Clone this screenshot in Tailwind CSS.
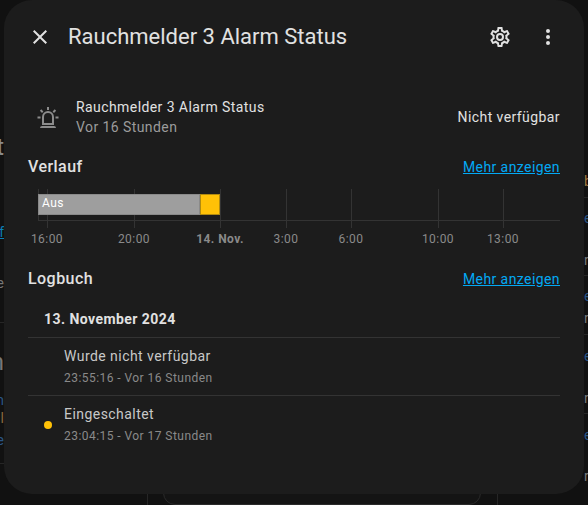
<!DOCTYPE html>
<html lang="de">
<head>
  <meta charset="UTF-8">
  <meta name="viewport" content="width=device-width, initial-scale=1.0">
  <title>Rauchmelder 3 Alarm Status</title>
  <script src="https://cdn.jsdelivr.net/npm/@tailwindcss/browser@4"></script>
</head>
<body class="relative bg-[#111111] w-[588px] h-[505px] overflow-hidden font-['Roboto',sans-serif]">
  <!-- Seite hinter dem Dialog: nur die Ränder sind sichtbar -->
  <div class="absolute inset-0 text-lg leading-none">
    <span class="absolute right-[584px] top-[131px] text-[#8a8a8a] text-2xl">t</span>
    <span class="absolute right-[584px] top-[222px] text-[#0c7fb5] text-sm underline">f</span>
    <span class="absolute right-[584px] top-[273px] text-[#777777] text-sm">e</span>
    <span class="absolute right-[584px] top-[346px] text-[#777777] text-2xl">n</span>
    <span class="absolute right-[584px] top-[390px] text-[#2a5585] text-sm">n</span>
    <span class="absolute right-[584px] top-[408px] text-[#8a6a40] text-sm">l</span>
    <span class="absolute right-[584px] top-[430px] text-[#2a5585] text-sm">e</span>
    <span class="absolute left-0 w-1 top-[322px] h-px bg-[#262626]"></span>
    <span class="absolute left-0 w-1 top-[463px] h-px bg-[#262626]"></span>

    <span class="absolute left-[584px] top-[171px] text-[#a07840] text-sm">b</span>
    <span class="absolute left-[584px] top-[208px] text-[#2a5585] text-sm">e</span>
    <span class="absolute left-[584px] top-[250px] text-[#777777] text-sm">r</span>
    <span class="absolute left-[584px] top-[286px] text-[#2a5585] text-sm">e</span>
    <span class="absolute left-[584px] top-[308px] text-[#777777] text-sm">r</span>
    <span class="absolute left-[584px] top-[346px] text-[#2a5585] text-sm">e</span>
    <span class="absolute left-[584px] top-[388px] text-[#777777] text-sm">r</span>
    <span class="absolute left-[584px] top-[425px] text-[#2a5585] text-sm">e</span>
    <span class="absolute left-[584px] top-[466px] text-[#777777] text-sm">r</span>
    <span class="absolute left-[584px] w-1 top-[197px] h-px bg-[#262626]"></span>
    <span class="absolute left-[584px] w-1 top-[275px] h-px bg-[#262626]"></span>
    <span class="absolute left-[584px] w-1 top-[334px] h-px bg-[#262626]"></span>
    <span class="absolute left-[584px] w-1 top-[413px] h-px bg-[#262626]"></span>

    <span class="absolute left-[147px] top-[480px] w-px h-[25px] bg-[#262626]"></span>
    <span class="absolute left-[497px] top-[480px] w-px h-[25px] bg-[#262626]"></span>
    <span class="absolute left-[163px] w-[318px] top-[470px] h-[35px] rounded-b-[12px] bg-[#141414] border border-[#2a2a2a]"></span>
  </div>

  <!-- Dialog -->
  <div class="relative ml-1 w-[580px] h-[494px] bg-[#1c1c1c] rounded-[28px] flex flex-col">
    <!-- Kopfzeile -->
    <header class="flex items-center h-[74px] pl-6 pr-6 shrink-0">
      <svg class="w-6 h-6 fill-[#e1e1e1]" viewBox="0 0 24 24"><path d="M19,6.41L17.59,5L12,10.59L6.41,5L5,6.41L10.59,12L5,17.59L6.41,19L12,13.41L17.59,19L19,17.59L13.41,12L19,6.41Z"/></svg>
      <h1 class="ml-4 text-[22px] leading-7 text-[#e1e1e1] flex-1">Rauchmelder 3 Alarm Status</h1>
      <svg class="w-6 h-6 fill-[#e1e1e1] mr-6" viewBox="0 0 24 24"><path d="M12,8A4,4 0 0,1 16,12A4,4 0 0,1 12,16A4,4 0 0,1 8,12A4,4 0 0,1 12,8M12,10A2,2 0 0,0 10,12A2,2 0 0,0 12,14A2,2 0 0,0 14,12A2,2 0 0,0 12,10M10,22C9.75,22 9.54,21.82 9.5,21.58L9.13,18.93C8.5,18.68 7.96,18.34 7.44,17.94L4.95,18.95C4.73,19.03 4.46,18.95 4.34,18.73L2.34,15.27C2.21,15.05 2.27,14.78 2.46,14.63L4.57,12.97L4.5,12L4.57,11L2.46,9.37C2.27,9.22 2.21,8.95 2.34,8.73L4.34,5.27C4.46,5.05 4.73,4.96 4.95,5.05L7.44,6.05C7.96,5.66 8.5,5.32 9.13,5.07L9.5,2.42C9.54,2.18 9.75,2 10,2H14C14.25,2 14.46,2.18 14.5,2.42L14.87,5.07C15.5,5.32 16.04,5.66 16.56,6.05L19.05,5.05C19.27,4.96 19.54,5.05 19.66,5.27L21.66,8.73C21.79,8.95 21.73,9.22 21.54,9.37L19.43,11L19.5,12L19.43,13L21.54,14.63C21.73,14.78 21.79,15.05 21.66,15.27L19.66,18.73C19.54,18.95 19.27,19.04 19.05,18.95L16.56,17.95C16.04,18.34 15.5,18.68 14.87,18.93L14.5,21.58C14.46,21.82 14.25,22 14,22H10M11.25,4L10.88,6.61C9.68,6.86 8.62,7.5 7.85,8.39L5.44,7.35L4.69,8.65L6.8,10.2C6.4,11.37 6.4,12.64 6.8,13.8L4.68,15.36L5.43,16.66L7.86,15.62C8.63,16.5 9.68,17.14 10.87,17.38L11.24,20H12.76L13.13,17.39C14.32,17.14 15.37,16.5 16.14,15.62L18.57,16.66L19.32,15.36L17.2,13.81C17.6,12.64 17.6,11.37 17.2,10.2L19.31,8.65L18.56,7.35L16.15,8.39C15.38,7.5 14.32,6.86 13.12,6.62L12.75,4H11.25Z"/></svg>
      <svg class="w-6 h-6 fill-[#e1e1e1]" viewBox="0 0 24 24"><path d="M12,16A2,2 0 0,1 14,18A2,2 0 0,1 12,20A2,2 0 0,1 10,18A2,2 0 0,1 12,16M12,10A2,2 0 0,1 14,12A2,2 0 0,1 12,14A2,2 0 0,1 10,12A2,2 0 0,1 12,10M12,4A2,2 0 0,1 14,6A2,2 0 0,1 12,8A2,2 0 0,1 10,6A2,2 0 0,1 12,4Z"/></svg>
    </header>

    <main class="px-6 flex-1">
      <!-- Status -->
      <div class="flex items-center h-10 mt-[23px]">
        <div class="w-12 shrink-0 pl-2 pt-[2px]">
          <svg class="w-6 h-6 fill-[#8c8c8c]" viewBox="0 0 24 24"><path d="M6,6.9L3.87,4.78L5.28,3.37L7.4,5.5L6,6.9M13,1V4H11V1H13M20.13,4.78L18,6.9L16.6,5.5L18.72,3.37L20.13,4.78M4.5,10.5V12.5H1.5V10.5H4.5M19.5,10.5H22.5V12.5H19.5V10.5M6,20H18A2,2 0 0,1 20,22H4A2,2 0 0,1 6,20M12,5A6,6 0 0,1 18,11V19H6V11A6,6 0 0,1 12,5M12,7A4,4 0 0,0 8,11V17H16V11A4,4 0 0,0 12,7Z"/></svg>
        </div>
        <div class="flex-1">
          <div class="text-sm leading-5 tracking-[0.42px] text-[#e1e1e1]">Rauchmelder 3 Alarm Status</div>
          <div class="text-sm leading-5 tracking-[0.42px] text-[#9b9b9b]">Vor 16 Stunden</div>
        </div>
        <div class="text-sm tracking-[0.42px] text-[#e1e1e1]">Nicht verfügbar</div>
      </div>

      <!-- Verlauf -->
      <div class="flex items-center justify-between mt-[20px] h-5">
        <h2 class="text-base font-medium tracking-[0.45px] text-[#e1e1e1]">Verlauf</h2>
        <a class="text-sm tracking-[0.42px] text-[#03a9f4] underline">Mehr anzeigen</a>
      </div>

      <!-- Diagramm: Gitterlinien und Beschriftungen liegen frei auf der Achse -->
      <div class="relative h-[70px] mt-[6px] text-xs tracking-[0.45px] text-[#8a8a8a]">
        <div class="absolute left-[10px] right-0 top-[37px] h-px bg-[#333333]"></div>
        <div class="absolute left-[10px] top-[6px] h-[32px] w-px bg-[#333333]"></div>
        <div class="absolute left-[19px] top-[6px] h-[39px] w-px bg-[#333333]"></div>
        <div class="absolute left-[106px] top-[6px] h-[39px] w-px bg-[#333333]"></div>
        <div class="absolute left-[192px] top-[6px] h-[39px] w-px bg-[#333333]"></div>
        <div class="absolute left-[258px] top-[6px] h-[39px] w-px bg-[#333333]"></div>
        <div class="absolute left-[323px] top-[6px] h-[39px] w-px bg-[#333333]"></div>
        <div class="absolute left-[410px] top-[6px] h-[39px] w-px bg-[#333333]"></div>
        <div class="absolute left-[475px] top-[6px] h-[39px] w-px bg-[#333333]"></div>
        <div class="absolute left-[10px] top-[11px] h-[21px] w-[182px] flex">
          <div class="w-[162px] bg-[#9e9e9e] border border-[#8a8a8a] text-white pl-[3px] leading-[17px]">Aus</div>
          <div class="flex-1 bg-[#ffc107] border border-[#b08a10]"></div>
        </div>
        <span class="absolute left-[19px] top-[48px] -translate-x-1/2">16:00</span>
        <span class="absolute left-[106px] top-[48px] -translate-x-1/2">20:00</span>
        <span class="absolute left-[192px] top-[48px] -translate-x-1/2 font-bold">14. Nov.</span>
        <span class="absolute left-[258px] top-[48px] -translate-x-1/2">3:00</span>
        <span class="absolute left-[323px] top-[48px] -translate-x-1/2">6:00</span>
        <span class="absolute left-[410px] top-[48px] -translate-x-1/2">10:00</span>
        <span class="absolute left-[475px] top-[48px] -translate-x-1/2">13:00</span>
      </div>

      <!-- Logbuch -->
      <div class="flex items-center justify-between mt-[16px] h-5">
        <h2 class="text-base font-medium tracking-[0.45px] text-[#e1e1e1]">Logbuch</h2>
        <a class="text-sm tracking-[0.42px] text-[#03a9f4] underline">Mehr anzeigen</a>
      </div>
      <div class="mt-[10px] h-[39px] pl-4 pt-[2px] flex items-center text-sm font-bold tracking-[0.45px] text-[#e1e1e1] border-b border-[#333333]">13. November 2024</div>
      <div class="h-[58px] pl-9 pt-[8px] border-b border-[#333333]">
        <div class="text-sm leading-5 tracking-[0.45px] text-[#c8c8c8]">Wurde nicht verfügbar</div>
        <div class="text-xs leading-5 tracking-[0.45px] text-[#8a8a8a] mt-[2px]">23:55:16 - Vor 16 Stunden</div>
      </div>
      <div class="relative h-[58px] pl-9 pt-[8px]">
        <span class="absolute left-4 top-[25px] w-2 h-2 rounded-full bg-[#ffc107]"></span>
        <div class="text-sm leading-5 tracking-[0.45px] text-[#c8c8c8]">Eingeschaltet</div>
        <div class="text-xs leading-5 tracking-[0.45px] text-[#8a8a8a] mt-[2px]">23:04:15 - Vor 17 Stunden</div>
      </div>
    </main>
  </div>
</body>
</html>
